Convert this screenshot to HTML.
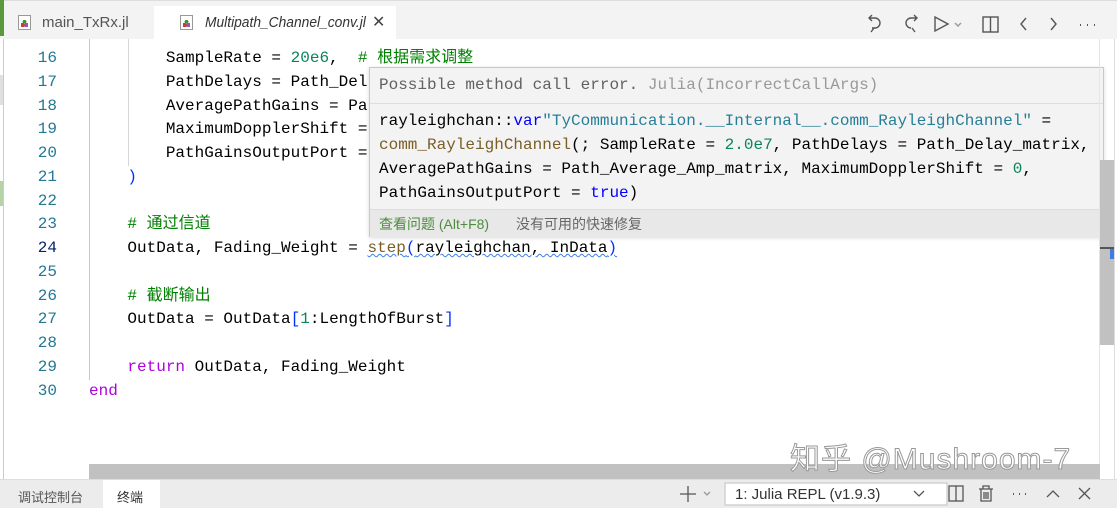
<!DOCTYPE html>
<html><head><meta charset="utf-8"><style>
*{margin:0;padding:0;box-sizing:border-box}
body{width:1117px;height:508px;overflow:hidden;background:#fff;position:relative;font-family:"Liberation Sans","Noto Sans CJK SC",sans-serif}
.mono{font-family:"Liberation Mono","Noto Sans CJK SC",monospace;font-size:16px;white-space:pre;line-height:20px;height:20px}
.ln{position:absolute;left:20px;width:37px;text-align:right;color:#237893;font-family:"Liberation Mono",monospace;font-size:16px;line-height:20px}
.cl{position:absolute;left:89px;color:#000}
.n{color:#098658}.c{color:#008000}.k{color:#af00db}.b{color:#0431fa}.f{color:#795e26}.v{color:#0000ff}.t{color:#267f99}.s{color:#a31515}
.abs{position:absolute}
</style></head><body>
<!-- line 15 partially (under tab bar) -->
<div class="abs mono" style="left:128px;top:21px;color:#000">rayleighchan = <span class="f">comm_RayleighChannel</span>(;</div>
<!-- top tab bar -->
<div class="abs" style="left:0;top:0;width:1117px;height:39px;background:#f3f3f3;border-top:1px solid #ddd"></div>
<div class="abs" style="left:0;top:0;width:4px;height:36px;background:#5a9a3e"></div>
<div class="abs" style="left:18px;top:15px;width:13px;height:15px;border:1px solid #999;background:#fff"></div>
<div class="abs" style="left:21px;top:20px;width:7px;height:7px;background:radial-gradient(circle at 50% 25%,#389826 30%,transparent 32%),radial-gradient(circle at 20% 75%,#cb3c33 30%,transparent 32%),radial-gradient(circle at 80% 75%,#9558b2 30%,transparent 32%)"></div>
<div class="abs" style="left:42px;top:14px;font-size:15px;color:#555">main_TxRx.jl</div>
<div class="abs" style="left:154px;top:6px;width:242px;height:33px;background:#fff"></div>
<div class="abs" style="left:180px;top:15px;width:13px;height:15px;border:1px solid #999;background:#fff"></div>
<div class="abs" style="left:183px;top:20px;width:7px;height:7px;background:radial-gradient(circle at 50% 25%,#389826 30%,transparent 32%),radial-gradient(circle at 20% 75%,#cb3c33 30%,transparent 32%),radial-gradient(circle at 80% 75%,#9558b2 30%,transparent 32%)"></div>
<div class="abs" style="left:205px;top:14px;font-size:15px;color:#333;font-style:italic;transform:scaleX(0.92);transform-origin:0 0">Multipath_Channel_conv.jl</div>
<div class="abs" style="left:372px;top:12px;font-size:16px;color:#444">✕</div>
<!-- toolbar icons -->
<svg class="abs" style="left:860px;top:10px" width="257" height="26" fill="none" stroke="#555" stroke-width="1.4">
<path d="M12 5 L9 8 L12 11 M9 8 H15 a5 5 0 0 1 0 10 H12 M14 18 l-3 4"/>
<path d="M54 5 L57 8 L54 11 M57 8 H51 a5 5 0 0 0 0 10 M52 18 l3 4"/>
<path d="M75 7 L88 14 L75 21 Z"/>
<path d="M95 13 l3 3 l3 -3" stroke="#999"/>
<rect x="123" y="7" width="15" height="15"/><path d="M130.5 7 V22"/>
<path d="M166 8 l-5 6 l5 6"/>
<path d="M191 8 l5 6 l-5 6"/>
<path d="M220 15 h1 M227 15 h1 M234 15 h1" stroke-width="2"/>
</svg>
<!-- left strip -->
<div class="abs" style="left:3px;top:39px;width:1px;height:440px;background:#ccc"></div>
<div class="abs" style="left:0;top:181px;width:3px;height:25px;background:#b5d3a6"></div>
<div class="abs" style="left:0;top:75px;width:3px;height:30px;background:#e0e0e0"></div>
<!-- indent guides -->
<div class="abs" style="left:89px;top:39px;width:1px;height:341px;background:#c8c8c8"></div>
<div class="abs" style="left:128px;top:39px;width:1px;height:127px;background:#d6d6d6"></div>
<!-- lines -->
<div class="ln" style="top:48px">16</div>
<div class="ln" style="top:72px">17</div>
<div class="ln" style="top:96px">18</div>
<div class="ln" style="top:119px">19</div>
<div class="ln" style="top:143px">20</div>
<div class="ln" style="top:167px">21</div>
<div class="ln" style="top:191px">22</div>
<div class="ln" style="top:214px">23</div>
<div class="ln" style="top:238px;color:#0b216f">24</div>
<div class="ln" style="top:262px">25</div>
<div class="ln" style="top:286px">26</div>
<div class="ln" style="top:309px">27</div>
<div class="ln" style="top:333px">28</div>
<div class="ln" style="top:357px">29</div>
<div class="ln" style="top:381px">30</div>
<div class="cl mono" style="top:48px">        SampleRate = <span class="n">20e6</span>,  <span class="c"># 根据需求调整</span></div>
<div class="cl mono" style="top:72px">        PathDelays = Path_Del</div>
<div class="cl mono" style="top:96px">        AveragePathGains = Pa</div>
<div class="cl mono" style="top:119px">        MaximumDopplerShift =</div>
<div class="cl mono" style="top:143px">        PathGainsOutputPort =</div>
<div class="cl mono" style="top:167px">    <span class="b">)</span></div>
<div class="cl mono" style="top:214px">    <span class="c"># 通过信道</span></div>
<div class="cl mono" style="top:238px">    OutData, Fading_Weight = <span class="f" style="text-decoration:underline wavy #3c7ee0;text-decoration-thickness:1px">step<span class="b">(</span><span style="color:#000">rayleighchan, InData</span><span class="b">)</span></span></div>
<div class="cl mono" style="top:286px">    <span class="c"># 截断输出</span></div>
<div class="cl mono" style="top:309px">    OutData = OutData<span class="b">[</span><span class="n">1</span>:LengthOfBurst<span class="b">]</span></div>
<div class="cl mono" style="top:357px">    <span class="k">return</span> OutData, Fading_Weight</div>
<div class="cl mono" style="top:381px"><span class="k">end</span></div>
<!-- hover -->
<div class="abs" style="left:369px;top:67px;width:735px;height:170px;background:#f3f3f3;border:1px solid #c8c8c8;box-shadow:0 1px 4px rgba(0,0,0,.15)">
<div class="mono" style="position:absolute;left:9px;top:7px;color:#616161">Possible method call error. <span style="color:#999">Julia(IncorrectCallArgs)</span></div>
<div style="position:absolute;left:0;top:35px;width:100%;height:1px;background:#ddd"></div>
<div class="mono" style="position:absolute;left:9px;top:41px;line-height:24px;height:auto;color:#000">rayleighchan::<span class="v">var</span><span class="t">"TyCommunication.__Internal__.comm_RayleighChannel"</span> =
<span class="f">comm_RayleighChannel</span>(; SampleRate = <span class="n">2.0e7</span>, PathDelays = Path_Delay_matrix,
AveragePathGains = Path_Average_Amp_matrix, MaximumDopplerShift = <span class="n">0</span>,
PathGainsOutputPort = <span class="v">true</span>)</div>
<div style="position:absolute;left:0;top:141px;width:100%;height:28px;background:#e8e8e8;border-top:1px solid #ddd"></div>
<div style="position:absolute;left:9px;top:146px;font-size:14px;color:#4d8c3d">查看问题 (Alt+F8)</div>
<div style="position:absolute;left:146px;top:146px;font-size:14px;color:#666">没有可用的快速修复</div>
</div>
<!-- vertical scrollbar -->
<div class="abs" style="left:1099px;top:39px;width:1px;height:440px;background:#e5e5e5"></div>
<div class="abs" style="left:1114px;top:39px;width:1px;height:440px;background:#ddd"></div>
<div class="abs" style="left:1100px;top:160px;width:14px;height:185px;background:#c1c1c1"></div>
<div class="abs" style="left:1100px;top:247px;width:14px;height:2px;background:#555"></div>
<div class="abs" style="left:1110px;top:249px;width:4px;height:10px;background:#3c7ee0"></div>
<!-- horizontal scrollbar -->
<div class="abs" style="left:89px;top:464px;width:1011px;height:15px;background:#c1c1c1"></div>
<!-- watermark -->
<div class="abs" style="left:790px;top:442px;font-size:30px;line-height:36px;letter-spacing:1px;color:#fff;-webkit-text-stroke:1px #999">知乎 @Mushroom-7</div>
<!-- bottom panel -->
<div class="abs" style="left:0;top:479px;width:1117px;height:29px;background:#ececec;border-top:1px solid #ddd"></div>
<div class="abs" style="left:18px;top:487px;font-size:13px;color:#555">调试控制台</div>
<div class="abs" style="left:103px;top:480px;width:57px;height:28px;background:#fff"></div>
<div class="abs" style="left:117px;top:487px;font-size:13px;color:#333">终端</div>
<svg class="abs" style="left:676px;top:482px" width="440" height="24" fill="none" stroke="#555" stroke-width="1.3">
<path d="M12 4 V20 M4 12 H20"/><path d="M28 10 l3 3 l3 -3" stroke="#999"/>
<rect x="49" y="1" width="222" height="22" fill="#fff" stroke="#ccc"/>
<path d="M238 9 l5 5 l5 -5"/>
<rect x="273" y="4" width="14" height="15"/><path d="M280 4 V19"/>
<path d="M303 7 H317 M307 7 V4 H313 V7 M305 7 V19 H315 V7 M308 10 V17 M310 10 V17 M312 10 V17"/>
<path d="M337 12 h1 M343 12 h1 M349 12 h1" stroke-width="2"/>
<path d="M371 15 l6 -6 l6 6"/>
<path d="M403 6 l11 11 M414 6 l-11 11"/>
</svg>
<div class="abs" style="left:735px;top:486px;font-size:15px;color:#333">1: Julia REPL (v1.9.3)</div>
</body></html>
